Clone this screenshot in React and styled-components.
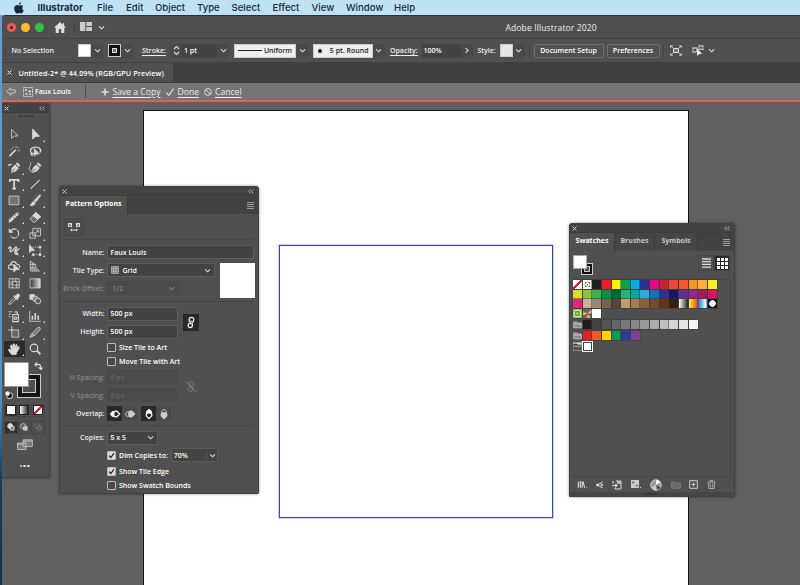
import styled, { createGlobalStyle, css } from "styled-components";

const GlobalStyle = createGlobalStyle`
  * { box-sizing: border-box; }
  body {
    margin: 0;
    overflow: hidden;
    font-family: "Open Sans", "Noto Sans", sans-serif;
  }
  svg { display: block; flex: none; overflow: visible; }
`;

const menuItems = [
  ["File", 29],
  ["Edit", 29],
  ["Object", 42],
  ["Type", 34.5],
  ["Select", 41],
  ["Effect", 39],
  ["View", 34.5],
  ["Window", 48],
  ["Help", 40],
];

const swatchRows = [
  ["none", "reg", "#202020", "#ee1c25", "#fff200", "#00a551", "#00aeef", "#2e3192", "#ec008c", "#c1272d", "#f0453a", "#f15a24", "#f7931e", "#fbb03b", "#fcee21"],
  ["#d9e021", "#8cc63f", "#39b54a", "#009245", "#006837", "#22b573", "#00a99d", "#29abe2", "#1071bc", "#2e3192", "#1b1464", "#662d91", "#93278f", "#a3195b", "#dc145f"],
  ["#ee1e79", "#c7b299", "#998675", "#736357", "#534741", "#c69c6d", "#a67c52", "#8c6239", "#754c24", "#603813", "#36200f", "fade", "sun", "sky", "dot"],
  ["flower", "leaves", "#ffffff"],
];
const grays = ["#1c1c1c", "#444444", "#555555", "#666666", "#777777", "#888888", "#999999", "#acacac", "#c0c0c0", "#d4d4d4", "#e6e6e6", "#f3f3f3"];
const brights = ["#ee1c25", "#f15a24", "#ffd400", "#00a14b", "#21409a", "#7f3f98"];

const patterns = {
  none: "linear-gradient(135deg, #fff 40%, #e01c1c 42% 58%, #fff 60%)",
  reg: "radial-gradient(circle, #444 10%, #fff 14% 32%, #666 36% 44%, transparent 48%), linear-gradient(#fff 44%, transparent 45% 55%, #fff 56%), linear-gradient(90deg, #fff 44%, #444 45% 55%, #fff 56%)",
  fade: "linear-gradient(90deg, #fff, #222)",
  sun: "linear-gradient(90deg, #ffee38, #f7931e 55%, #ed3b24)",
  sky: "linear-gradient(90deg, #1b75bc, #a4d8f4 60%, #fff 80%, #4ca0d8)",
  dot: "radial-gradient(circle, #fff 48%, #111 54%)",
  flower: "radial-gradient(circle, #e9c62a 18%, #57a63a 22% 45%, #e4efc3 48% 60%, #8cc070 64%)",
  leaves: "repeating-conic-gradient(#80604b 0 12%, #d9c5ac 13% 21%, #a98768 22% 28%)",
};

const toolGlyphs = [
  <path d="M4 1.5v10.2l2.8-2.6 4.3-.3z" fill="none" />,
  <path d="M4 1v11.5l3-3.1 4.8-.2z" />,
  <><path d="M1.6 12.5 8.8 5.3" strokeWidth="1.8" /><path d="M9 1v2M12 3l-1.2 1M11 6.3h2M5.5 2.5v1.4M3 5h1.2" /></>,
  <><path d="M6 10C.5 9.5 0 3.5 6 2.6s8.8 3.1 6 5.7M3.5 9.5c-1.7.5-1.5 2.5.8 2" fill="none" strokeWidth="1.5" /><path d="M6 4.2v8l2.3-2.1 3.2-.1z" /></>,
  <><path d="m4 12.8.6-5L8 4.4l3.6 3.3-3 3.6zM9 3.2l1.3-1.3 3.1 3-1 1.2z" /><path d="M0 5c2-1.8 3.5-.3 4-1.5" fill="none" strokeWidth="1.4" /><path d="m4.4 12.2 3.1-3.6" stroke="#505050" /></>,
  <><path d="m4 12.8.6-5L8 4.4l3.6 3.3-3 3.6zM9 3.2l1.3-1.3 3.1 3-1 1.2z" /><path d="M1 1c3 2-1.8 5.5-.6 8.5.8 2 2.2 1 3.6 3.2" fill="none" /><path d="m4.4 12.2 3.1-3.6" stroke="#505050" /></>,
  <path d="M2 4.4V2h9.8v2.4M6.9 2v10M4.8 12h4.2" fill="none" strokeWidth="1.9" />,
  <path d="M2 12 12 2" fill="none" strokeWidth="1.2" />,
  <path d="M1.2 2.3h11v9.7h-11z" fill="#737373" />,
  <><path d="M5.8 7.3 11.8 1c.8-.4 1.5.2 1 1L7.7 9z" /><path d="M1 12.6c2-.4 1.5-3.3 3.7-4 1.6-.3 2.6 1.2 1.8 2.6C5.5 13 3 13.2 1 12.6z" /></>,
  <><path d="m1 12.5 1-3.6 2.4 2.3z" /><path d="m3.5 9.6 8.2-7.2" strokeWidth="3.4" /><path d="m5.3 6.4 2.5 2.5M7.8 4.3l2.4 2.5M10 2.4l2.1 2.1" stroke="#505050" /></>,
  <><path d="m1.2 8.8 6.4-7.1 5.3 4.7-6.5 6.2H4.8z" fill="#696969" /><path d="m4.3 5.3 3.3-3.6 5.3 4.7-3.2 3.1z" /></>,
  <><path d="M3 4.3a5 5 0 1 1-.4 5.5" fill="none" strokeDasharray="7 1" strokeWidth="1.2" /><path d="M1.3 2v4h4z" /></>,
  <><path d="M1 6.6h6v6H1zM4.2 1.5h8.7v8.4H4.2z" fill="none" /><path d="m6.2 8 4.3-4.1M8 3.7h2.8v2.8" fill="none" /></>,
  <><path d="M.5 5.5C2 2 4.5 3.5 3 6S2.5 9.500 5 7.5 8.5 2 9.5 3.5 6.5 8.5 8 9s3-4.5 5-3.5" fill="none" strokeWidth="1.5" /><path d="m7 10.5 3.2-1 1.3 3z" /></>,
  <><path d="M4 3.5h8.5V12H4.7" fill="none" strokeDasharray="1.5 1" /><path d="M.6 1v8.6L3 7.4l3.2-.2zM11.4 2.5h2v2h-2zM11.4 11h2v2h-2zM3.7 11h2v2h-2z" /></>,
  <><path d="M8 10.5C-1.5 11.6-.8 5.5 3 5.2 3.5.8 9 .8 9.3 4.5c4 .4 4.4 3 3.4 4.4M3 5.2c1.8.3 4-.2 5 2" fill="none" strokeWidth="1.2" /><path d="M6.6 5v8.4L9 11l3.8-.3z" /></>,
  <><path d="M1.5 1.4v10.9H12M1.5 1.4 7.5 5.5v3h-6M1.5 5.2h6M4.4 3.5v5" fill="none" /><path d="m8 8 5 4.5H3.5L1.5 9z" fill="#999" stroke="none" /></>,
  <><path d="M1.2 2h11.3v10.2H1.2z" fill="none" /><path d="M1.2 5.2c3 2.5 4.5-2 11.3.8M1.2 9c3.6-3.2 5 2.5 11.3-.5M4.5 2c3 3-2 6 1 10.2M9 2C7 5.6 12 7 9.4 12.2" fill="none" /></>,
  <path d="M1.2 2h11.3v10.2H1.2z" fill="url(#toolfade)" />,
  <><path d="m1 12.8.6-2.4 5.6-5.3L9 6.8l-5.7 5.3z" fill="none" /><path d="m6.4 3.7 1-1 1 .9L10 1.7c2-1.7 4 1 2.4 2.6l-1.8 1.5.9 1-1 .9z" /></>,
  <><path d="M1 1.8h5v5.3H1z" /><circle cx="7" cy="6.5" r="3.1" fill="#888" /><circle cx="10" cy="9" r="3.2" fill="#606060" /></>,
  <><path d="M5.4 5h6.2v8H5.4zM7 2.2h3.4V5" fill="none" strokeWidth="1.2" /><circle cx="8.5" cy="9" r="1.5" fill="none" strokeWidth="1.2" /><path d="M.5 2H5M.5 4.7h3M.7 7.5H3" /></>,
  <><path d="M.8 1v11.7h12.4" fill="none" /><path d="M3.8 11V6.5M7 11V3.3M10.3 11V6.2" strokeWidth="1.8" /></>,
  <><path d="M4.2 4.4h7.8v8H4.2z" fill="#666" /><path d="M4.2 0v6M0 4.4h6" fill="none" /></>,
  <path d="m1 12.8 1.7-3.5L9.8 1.7c1.9-1.2 3.5.8 2.4 2.5l-6 6.3zM2.7 9.3l3.5 1.2" fill="#777" />,
  <path d="M4 13 .8 8.5C0 7.2 1.4 6.5 2.3 7.5l1.3 1.2L3 3.2C2.8 2 4.3 1.8 4.6 3l.9 3.3L5.7 1.7c.1-1.2 1.6-1.2 1.7 0l.2 4.4 1.2-3.8c.4-1.2 1.8-.7 1.5.5l-.8 4.3 1.7-2.5c.8-1 2-.2 1.4.9l-3 5.3L9 13z" />,
  <><circle cx="5.6" cy="5.5" r="4.2" fill="none" strokeWidth="1.3" /><path d="m8.7 8.6 4 4" strokeWidth="2" /></>,
];
const flyoutless = [0, 2, 3, 5, 18, 19, 21, 27];

function Chevron({ size = 7, color = "#e0e0e0", right }) {
  return (
    <svg width={size} height={size} viewBox="0 0 8 8" fill="none" stroke={color} strokeWidth="1.3">
      <path d={right ? "m3 1.3 2.8 2.8L3 6.8" : "m1.3 2.7 2.8 2.8 2.8-2.8"} />
    </svg>
  );
}

function ChainIcon({ off }) {
  return (
    <svg width="12" height="13" viewBox="0 0 12 14" fill="none" stroke={off ? "#858585" : "#eee"} strokeWidth={off ? 0.9 : 1.4}>
      <path d="M4.4 6.4 4 4c0-3.4 5-3.4 5-.2 0 1.4-.8 2.6-2 2.9M7.2 7.4 7.6 10c0 3.2-4.7 3.2-4.7.1 0-1.500.6-2.4 1.8-2.8M6.2 5.1 5.400 9" />
      {off && <path d="m.5 1.5 11 11.5" />}
    </svg>
  );
}

function PanelTop() {
  return (
    <PanelBar>
      <svg width="5" height="5" viewBox="0 0 5 5" stroke="#ddd" strokeWidth=".9"><path d="m.5.5 4 4m0-4-4 4" /></svg>
      <svg width="6" height="5" viewBox="0 0 6 5" fill="none" stroke="#ccc" strokeWidth=".8"><path d="M2.5.5.7 2.4l1.8 1.9M5.3.5 3.5 2.4l1.8 1.9" /></svg>
    </PanelBar>
  );
}

function Hamburger() {
  return <svg width="7" height="7" viewBox="0 0 7 7" stroke="#b5b5b5" strokeWidth=".8"><path d="M0 .5h7M0 2.5h7M0 4.5h7M0 6.5h7" /></svg>;
}

function OverlapIcon({ dim, turn }) {
  return (
    <svg width="10" height="10" viewBox="0 0 10 10" style={{ transform: turn ? "rotate(90deg)" : undefined }}>
      <path d="M.3 5 2.2 2.5h3v5h-3z" fill={dim ? "#505050" : "#fff"} stroke={dim ? "#ccc" : "#fff"} strokeWidth=".8" />
      <path d="M3.8 3.8 5.2 2.2h1.6L9.7 5 6.8 7.8H5.2L3.8 6.2z" fill={dim ? "#ccc" : "#292929"} stroke={dim ? "#ccc" : "#fff"} strokeWidth="1.2" />
    </svg>
  );
}

function FolderIcon({ open }) {
  return (
    <svg width="9" height="9" viewBox="0 0 9 9">
      {open && <path d="M.2.5h8.6v8H.2z" fill="#e2e2e2" />}
      <path d="M.8 2h3l.8 1h3.7v4.8H.8z" fill={open ? "#555" : "#888"} stroke={open ? "#333" : "#ddd"} strokeWidth=".7" />
      <path d="M.8 4.2h7.5" stroke="#eee" strokeWidth=".6" />
    </svg>
  );
}

function Check({ on, children, $h }) {
  return (
    <CheckRow $h={$h}>
      <Box $on={on}>
        {on && <svg width="7" height="7" viewBox="0 0 7 7" fill="none" stroke="#222" strokeWidth="1.2"><path d="m1 3.6 1.8 1.9L6 1.2" /></svg>}
      </Box>
      {children}
    </CheckRow>
  );
}

function ToolsPanel() {
  return (
    <Tools>
      <PanelTop />
      <Grip />
      <ToolGrid>
        {toolGlyphs.map((g, i) => (
          <Tool key={i} $active={i === 26} $flyout={!flyoutless.includes(i)}>
            <svg width="12.5" height="12.5" viewBox="0 0 14 14" fill="#dadada" stroke="#dadada" strokeWidth=".9">{g}</svg>
          </Tool>
        ))}
      </ToolGrid>
      <FillStroke>
        <StrokeSquare><i /></StrokeSquare>
        <FillSquare />
        <SwapIcon width="9" height="9" viewBox="0 0 9 9" fill="none" stroke="#ddd" strokeWidth="1.2">
          <path d="M2 2.4h2.4c2 0 2.4 1 2.4 3.8M3 .4.9 2.4 3 4.4M4.8 5.4l2 2 2-2" />
        </SwapIcon>
        <DefaultIcon width="9" height="9" viewBox="0 0 9 9">
          <circle cx="5.6" cy="5.6" r="3" fill="#151515" stroke="#eee" /><circle cx="3.5" cy="3.5" r="2.7" fill="#fff" stroke="#222" strokeWidth=".8" />
        </DefaultIcon>
      </FillStroke>
      <ModeRow>
        <Mode $active><Chip $bg="#fff" /></Mode>
        <Mode><Chip $bg="linear-gradient(90deg,#fff,#222)" /></Mode>
        <Mode><Chip $bg={patterns.none} /></Mode>
      </ModeRow>
      <ModeRow $low>
        {[1, 0.85, 0.25].map((o, i) => (
          <Mode key={i} $active={i === 0}>
            <svg width="8" height="8" viewBox="0 0 9 9" opacity={o} stroke="#ddd"><circle cx="3.6" cy="3.5" r="2.8" fill={i === 0 ? "#ddd" : "none"} /><path d="M4 4h4v4H4z" fill={i === 1 ? "#ddd" : "#777"} /></svg>
          </Mode>
        ))}
      </ModeRow>
      <ScreenMode>
        <svg width="16" height="12" viewBox="0 0 16 12" fill="#777" stroke="#ccc" strokeWidth=".8"><path d="M.5 4h8.5v6.5H.5zM6.2.8h9.2v6.8H6.2z" /><path d="M6.2 2h9.2M.5 5.2h5" /></svg>
      </ScreenMode>
      <Dots><i /><i /><i /></Dots>
    </Tools>
  );
}

function PatternPanel() {
  return (
    <Pattern>
      <PanelTop />
      <Tabs>
        <Tab $w={68} $active>Pattern Options</Tab>
        <Hamburger />
      </Tabs>
      <TileTool>
        <svg width="14" height="11" viewBox="0 0 14 11" fill="#ddd"><path d="M1 1h4v4H1zM9 1h4v4H9z" /><path d="m2 2 2 2M12 2l-2 2M2 4h1M11 4h1" stroke="#444" strokeWidth=".8" /><path d="m3 8 2-1.6v1.1h4V6.4L11 8 9 9.6V8.5H5v1.1z" /></svg>
      </TileTool>
      <Rule />
      <Field $top={3}><Label>Name:</Label><Input $w={147}>Faux Louis</Input></Field>
      <TileRow>
        <div>
          <Field>
            <Label>Tile Type:</Label>
            <Input $w={108}>
              <svg width="8" height="8" viewBox="0 0 8 8" fill="#777" stroke="#ccc" strokeWidth=".6"><path d="M.5.5h7v7h-7zM.5 2.8h7M.5 5.2h7M2.8.5v7M5.2.5v7" /></svg>
              <span>Grid</span>
              <Chevron />
            </Input>
          </Field>
          <Field $dim><Label>Brick Offset:</Label><Input $w={72} $dim>&nbsp;1/2<Chevron color="#858585" /></Input></Field>
        </div>
        <Preview />
      </TileRow>
      <Rule $top={4} />
      <LinkRow $h={39}>
        <div>
          <Field $top={2.5}><Label>Width:</Label><Input $w={71}>500 px</Input></Field>
          <Field><Label>Height:</Label><Input $w={71}>500 px</Input></Field>
        </div>
        <LinkButton><ChainIcon /></LinkButton>
      </LinkRow>
      <Check $h={13}>Size Tile to Art</Check>
      <Check $h={14}>Move Tile with Art</Check>
      <LinkRow $h={36}>
        <div>
          <Field $dim><Label>H Spacing:</Label><Input $w={71} $dim $faint>0 px</Input></Field>
          <Field $dim><Label>V Spacing:</Label><Input $w={71} $dim $faint>0 px</Input></Field>
        </div>
        <LinkButton $off><ChainIcon off /></LinkButton>
      </LinkRow>
      <Field $top={0.5}>
        <Label>Overlap:</Label>
        <Overlap $active><OverlapIcon /></Overlap>
        <Overlap><OverlapIcon dim /></Overlap>
        <Overlap $active $gap><OverlapIcon turn /></Overlap>
        <Overlap><OverlapIcon dim turn /></Overlap>
      </Field>
      <Rule $top={2} />
      <Field $top={3}><Label>Copies:</Label><Input $w={51}>5 x 5<Chevron /></Input></Field>
      <Check on $h={17}>Dim Copies to: <DimInput><span>70%</span><i><Chevron /></i></DimInput></Check>
      <Check on $h={15}>Show Tile Edge</Check>
      <Check $h={13}>Show Swatch Bounds</Check>
    </Pattern>
  );
}

function SwatchesPanel() {
  return (
    <Swatches>
      <PanelTop />
      <Tabs>
        <Tab $w={45} $active>Swatches</Tab>
        <Tab $w={40}>Brushes</Tab>
        <Tab $w={43}>Symbols</Tab>
        <Hamburger />
      </Tabs>
      <SwatchHead>
        <SwatchPair>
          <i /><b />
        </SwatchPair>
        <ViewButtons>
          <span><svg width="9" height="10" viewBox="0 0 9 10" stroke="#ddd" strokeWidth="1.3"><path d="M0 1h9M0 3.7h9M0 6.4h9M0 9.1h9" /></svg></span>
          <span><svg width="11" height="11" viewBox="0 0 11 11" fill="#fff"><path d="M0 0h3v3H0zM4 0h3v3H4zM8 0h3v3H8zM0 4h3v3H0zM4 4h3v3H4zM8 4h3v3H8zM0 8h3v3H0zM4 8h3v3H4zM8 8h3v3H8z" /></svg></span>
        </ViewButtons>
      </SwatchHead>
      <SwatchList>
        {swatchRows.map((row, r) => (
          <SwatchRow key={r}>{row.map((c, i) => <Swatch key={i} $bg={patterns[c] || c} />)}</SwatchRow>
        ))}
        <SwatchRow $group={10}><FolderIcon />{grays.map((c) => <Swatch key={c} $bg={c} />)}</SwatchRow>
        <SwatchRow $group={11}><FolderIcon />{brights.map((c) => <Swatch key={c} $bg={c} />)}</SwatchRow>
        <SwatchRow $group={11}><FolderIcon open /><Swatch $bg="#fff" $picked /></SwatchRow>
      </SwatchList>
      <SwatchFoot>
        <svg width="10" height="9" viewBox="0 0 10 10" fill="none" stroke="#ddd" strokeWidth="1.2"><path d="M1 2v6.5M3.2 1v7.5M5.2 2v6.5M6 1.5l2 7" /><path d="M9.5 8.6h1" /></svg>
        <svg width="8" height="8" viewBox="0 0 8 8" fill="#ddd" stroke="#ddd"><path d="M6.8.8 1.5 4l5.3 3.1" fill="none" /><circle cx="1.5" cy="4" r="1" /><circle cx="5.8" cy="4" r=".8" /></svg>
        <svg width="10" height="10" viewBox="0 0 10 10" fill="none" stroke="#ddd"><path d="M4 1h5v8H3V7.5" /><path d="M5 1h4v3H5z" fill="#bbb" stroke="none" /><path d="M0 5.5h5M3.3 3.8 5 5.5 3.3 7.2M1 1v2.5" strokeWidth="1.2" /></svg>
        <svg width="10" height="9" viewBox="0 0 10 9" fill="#ccc"><path d="M0 0h8v8H0z" /><path d="M1.2 2.5h2M4.8 5.5h2" stroke="#555" strokeWidth="1.5" /><path d="M9 7h1v1H9z" /></svg>
        <svg width="12" height="12" viewBox="0 0 12 12"><circle cx="6" cy="6" r="5.3" fill="#999" stroke="#ddd" strokeWidth=".8" /><path d="M6 6V.8A5.2 5.2 0 0 1 10.5 3.4z" fill="#eee" /><path d="M6 6 1.5 8.5A5.2 5.2 0 0 0 6 11.2z" fill="#ccc" /><path d="m6 6 4.5 2.5a5 5 0 0 1-2.6 2.2z" fill="#444" /></svg>
        <svg width="10" height="8" viewBox="0 0 10 8"><path d="M.5 1h3l.8 1h5v5.3H.5z" fill="#6b6b6b" stroke="#777" /></svg>
        <svg width="9" height="9" viewBox="0 0 9 9" fill="none" stroke="#ccc"><path d="M.7.7h7.6v7.6H.7zM4.5 2.6v3.8M2.6 4.5h3.8" /></svg>
        <svg width="9" height="9" viewBox="0 0 9 9" fill="none" stroke="#aaa"><path d="M.5 2h8M3 1.8V.6h3v1.2M1.4 2.5l.4 6h5.4l.4-6M3.3 3.5v4M5.7 3.5v4" /></svg>
      </SwatchFoot>
      <Grabber />
    </Swatches>
  );
}

export default function App() {
  return (
    <Desktop>
      <GlobalStyle />
      <MenuBar>
        <svg width="10" height="12" viewBox="0 0 10 12" fill="#142a3c"><path d="M7 .2C5.7.3 4.7 1.6 4.9 2.8 6.2 2.8 7.1 1.5 7 .2zM9.3 4C8 3 6.7 3 5.6 3.5 4.9 3.8 4.5 3.5 3.7 3.2 1.7 2.7.2 4.2.2 6.4c0 2.3 1.5 5 3 5 .8 0 1.1-.5 2.1-.5s1.2.5 2 .5c1.1 0 2-1.6 2.5-2.8C7.9 7.7 7.8 5 9.3 4z" /></svg>
        <AppName>Illustrator</AppName>
        {menuItems.map(([name, w]) => <MenuItem key={name} $w={w}>{name}</MenuItem>)}
      </MenuBar>
      <Window>
        <TitleBar>
          <Light $c="#ee5b50"><i /></Light>
          <Light $c="#f6bb30" />
          <Light $c="#2ec53f" />
          <HomeIcon width="12" height="11" viewBox="0 0 12 11" fill="#ddd"><path d="M6 0 0 5.7h1.7V11h3.1V7h2.4v4h3.1V5.7H12L10.2 4V1H8.8v1.7z" /></HomeIcon>
          <Divider $h={13} />
          <LayoutIcon width="12" height="9" viewBox="0 0 12 9" fill="#ccc"><path d="M0 0h5.3v9H0zM6.3 0H12v4H6.3zM6.3 5H12v4H6.3z" /></LayoutIcon>
          <Chevron />
          <Title>Adobe Illustrator 2020</Title>
        </TitleBar>
        <ControlBar>
          <Divider $h={13} />
          <Text $w={66.5} $ml={5.5}>No Selection</Text>
          <ColorChip $bg="#fff" /><Arrow><Chevron /></Arrow>
          <ColorChip $ml={5} $bg="#111"><i /></ColorChip><Arrow><Chevron /></Arrow>
          <Text $ml={9} $w={28} $under><u>Stroke:</u></Text>
          <Stepper><svg width="7" height="11" viewBox="0 0 7 11" fill="none" stroke="#ddd" strokeWidth="1.1"><path d="m1 4 2.5-2.5L6 4M1 7l2.5 2.5L6 7" /></svg></Stepper>
          <NumberField $w={35}>1 pt</NumberField><Arrow><Chevron /></Arrow>
          <WhiteBox $w={62} $ml={5}><Line /><span>Uniform</span></WhiteBox><Arrow><Chevron /></Arrow>
          <WhiteBox $w={60} $ml={4.5}><Dot /><span>5 pt. Round</span></WhiteBox><Arrow><Chevron /></Arrow>
          <Text $ml={5.5} $w={31.5} $under><u>Opacity:</u></Text>
          <NumberField $w={39}>100%</NumberField><Arrow><Chevron right /></Arrow>
          <Text $ml={5} $w={22}>Style:</Text>
          <ColorChip $bg="#e6e6e6" /><Arrow><Chevron /></Arrow>
          <Divider $h={13} $ml={4.5} />
          <Button $w={70} $ml={3.5}>Document Setup</Button>
          <Button $w={53} $ml={3}>Preferences</Button>
          <Divider $h={13} $ml={3} />
          <ControlIcon $ml={6.5} width="12" height="11" viewBox="0 0 12 11" fill="none" stroke="#ddd"><path d="M3.5 3.5h5v4h-5z" fill="#777" /><path d="M.5 3V.7h2.3M9 .7h2.4V3M.5 8v2.3h2.3M9 10.3h2.4V8M1 1l2 2M11 1 9 3M1 10l2-2M11 10 9 8" strokeWidth=".8" /></ControlIcon>
          <ControlIcon $ml={10} width="12" height="11" viewBox="0 0 12 11" fill="none" stroke="#ccc" strokeWidth=".8"><path d="M1 3h3.7v4H1zM7 1h3.8v3.3H7zM0 3h6M0 7h4M6 .9h6M6 4.3h6" /><path d="M5 3.5V11l2.2-2h2.9z" fill="#eee" stroke="none" /></ControlIcon>
          <ControlIcon $ml={4} width="7" height="7" viewBox="0 0 8 8" fill="none" stroke="#e0e0e0" strokeWidth="1.3"><path d="m1.3 2.7 2.8 2.8 2.8-2.8" /></ControlIcon>
        </ControlBar>
        <DocTabs>
          <DocTab>
            <svg width="5" height="5" viewBox="0 0 5 5" stroke="#eee"><path d="m.5.5 4 4m0-4-4 4" /></svg>
            <span>Untitled-2* @ 44.09% (RGB/GPU Preview)</span>
          </DocTab>
        </DocTabs>
        <IsolationBar>
          <svg width="10" height="9" viewBox="0 0 10 9" fill="none" stroke="#ccc" strokeWidth=".9"><path d="M.7 4.5 4.7.8v2.1h4.4v3.2H4.7v2.1z" /></svg>
          <PatternGlyph width="10" height="10" viewBox="0 0 10 10" stroke="#ddd" fill="#ddd"><path d="M.5.5h9v9h-9z" fill="none" strokeDasharray="4.5 .5" strokeWidth=".7" /><path d="M2.5 2.5h1v1h-1zM6 4h1.5v1H6zM3 6.5h1v1H3zM6.5 7h1v.5h-1z" /></PatternGlyph>
          <Crumb>Faux Louis</Crumb>
          <CrumbRule />
          <Action $w={65}><svg width="8" height="8" viewBox="0 0 8 8" stroke="#ddd" strokeWidth="1.6"><path d="M4 .5v7M.5 4h7" /></svg><u>Save a Copy</u></Action>
          <Action $w={37.5}><svg width="8" height="8" viewBox="0 0 8 8" fill="none" stroke="#ddd" strokeWidth="1.2"><path d="m.5 4.6 2.3 2.7L7.6.6" /></svg><u>Done</u></Action>
          <Action $w={40}><svg width="8" height="8" viewBox="0 0 8 8" fill="none" stroke="#ddd"><circle cx="4" cy="4" r="3.4" /><path d="m1.6 1.6 4.8 4.8" /></svg><u>Cancel</u></Action>
        </IsolationBar>
        <Canvas>
          <Artboard><Tile /></Artboard>
          <ToolsPanel />
          <PatternPanel />
          <SwatchesPanel />
        </Canvas>
      </Window>
      <svg width="0" height="0">
        <defs><linearGradient id="toolfade"><stop stopColor="#333" /><stop offset="1" stopColor="#ddd" /></linearGradient></defs>
      </svg>
    </Desktop>
  );
}

const Desktop = styled.div`
  width: 800px;
  height: 585px;
  display: flex;
  flex-direction: column;
  overflow: hidden;
  background: linear-gradient(#659fce, #4e92c7 400px, #123b5d 480px, #0c3352);
`;
const MenuBar = styled.div`
  flex: none;
  height: 15px;
  padding-left: 14px;
  display: flex;
  align-items: center;
  background: #bee1f5;
  color: #142a3c;
  font: 500 9.6px/14px Inter, sans-serif;
`;
const AppName = styled.b`
  width: 59.5px;
  margin-left: 13.5px;
  font-weight: 700;
`;
const MenuItem = styled.span`
  width: ${(p) => p.$w}px;
`;
const Window = styled.div`
  flex: 1;
  margin-left: 2px;
  display: flex;
  flex-direction: column;
  border-top: 1px solid #2a3337;
  border-radius: 4px 0 0 0;
  background: #505050;
  color: #ececec;
  font-size: 7px;
  font-weight: 600;
`;
const TitleBar = styled.div`
  height: 23px;
  flex: none;
  padding: 1px 0 0 5px;
  display: flex;
  align-items: center;
  border-bottom: 1px solid #444;
`;
const Light = styled.span`
  width: 9px;
  height: 9px;
  margin-right: 4.8px;
  display: grid;
  place-items: center;
  border-radius: 50%;
  background: ${(p) => p.$c};
  i {
    width: 3px;
    height: 3px;
    border-radius: 50%;
    background: #501009;
  }
`;
const HomeIcon = styled.svg`
  margin: 0 8px 0 6px;
`;
const LayoutIcon = styled.svg`
  margin: -2px 6px 0 5px;
`;
const Divider = styled.span`
  width: 1px;
  height: ${(p) => p.$h}px;
  flex: none;
  margin-left: ${(p) => p.$ml || 0}px;
  background: #434343;
`;
const Title = styled.span`
  margin-left: 400px;
  font: 500 8.6px/12px "Open Sans", sans-serif;
  letter-spacing: 0.1px;
`;
const ControlBar = styled.div`
  height: 24px;
  flex: none;
  padding-left: 3px;
  display: flex;
  align-items: center;
  border-bottom: 1px solid #414141;
`;
const Text = styled.span`
  flex: none;
  width: ${(p) => p.$w}px;
  margin-left: ${(p) => p.$ml}px;
  white-space: nowrap;
  ${(p) => p.$under && css`
    u { text-underline-offset: 1.5px; text-decoration-thickness: 0.7px; }
  `}
`;
const ColorChip = styled.span`
  flex: none;
  width: 13px;
  height: 13px;
  margin-left: ${(p) => p.$ml || 0}px;
  display: grid;
  place-items: center;
  border: 1px solid #ccc;
  background: ${(p) => p.$bg};
  i {
    width: 5px;
    height: 5px;
    border: 1px solid #ddd;
    background: #777;
  }
`;
const Arrow = styled.span`
  flex: none;
  width: 12px;
  height: 14px;
  display: grid;
  place-items: center;
  border: 1px solid #474747;
  background: #4a4a4a;
`;
const Stepper = styled(Arrow)`
  width: 12px;
`;
const NumberField = styled.span`
  flex: none;
  width: ${(p) => p.$w}px;
  height: 14px;
  padding-left: 2px;
  background: #424242;
  color: #fff;
  line-height: 14px;
`;
const WhiteBox = styled.span`
  flex: none;
  width: ${(p) => p.$w}px;
  height: 14px;
  margin-left: ${(p) => p.$ml}px;
  padding: 0 3px;
  display: flex;
  align-items: center;
  justify-content: space-between;
  border: 1px solid #ccc;
  background: #efefef;
  color: #222;
`;
const Line = styled.i`
  width: 24px;
  height: 1px;
  background: #222;
`;
const Dot = styled.i`
  width: 4px;
  height: 4px;
  margin-left: 1px;
  border-radius: 50%;
  background: #111;
`;
const Button = styled.span`
  flex: none;
  width: ${(p) => p.$w}px;
  height: 14px;
  margin-left: ${(p) => p.$ml}px;
  border: 1px solid #707070;
  border-radius: 2px;
  text-align: center;
  line-height: 12px;
  color: #fff;
`;
const ControlIcon = styled.svg`
  margin-left: ${(p) => p.$ml}px;
`;
const DocTabs = styled.div`
  height: 20px;
  flex: none;
  background: #404040;
  border-bottom: 1px solid #393939;
`;
const DocTab = styled.div`
  width: 171px;
  height: 19px;
  padding-left: 5px;
  display: flex;
  align-items: center;
  gap: 6.5px;
  background: #505050;
  color: #fff;
  font-size: 7.2px;
  letter-spacing: 0.1px;
  white-space: nowrap;
`;
const IsolationBar = styled.div`
  height: 19px;
  flex: none;
  padding: 0 0 0 4px;
  display: flex;
  align-items: center;
  background: #747474;
  border-bottom: 2px solid #dd625d;
`;
const PatternGlyph = styled.svg`
  margin-left: 7px;
`;
const Crumb = styled.span`
  margin-left: 2px;
  width: 51px;
  color: #fff;
`;
const CrumbRule = styled.span`
  width: 1px;
  height: 13px;
  margin: 0 15px 0 -1px;
  background: #484848;
`;
const Action = styled.span`
  width: ${(p) => p.$w}px;
  display: flex;
  align-items: center;
  gap: 3.5px;
  white-space: nowrap;
  font-size: 8.6px;
  font-weight: 500;
  line-height: 12px;
  u { text-underline-offset: 1.5px; text-decoration-thickness: 1px; }
`;
const Canvas = styled.div`
  flex: 1;
  position: relative;
  overflow: hidden;
  background: #606060;
`;
const Artboard = styled.div`
  position: absolute;
  left: 141px;
  top: 8px;
  width: 546px;
  height: 490px;
  border: 1px solid #111;
  background: #fff;
`;
const Tile = styled.div`
  position: absolute;
  left: 135px;
  top: 134px;
  width: 274px;
  height: 273px;
  border: 1px solid #3540e0;
  box-shadow: 0 0 0 1px rgba(70, 80, 235, 0.25);
`;
const Panel = styled.div`
  position: absolute;
  border: 1px solid #424242;
  border-radius: 3px 3px 1px 1px;
  background: #505050;
  box-shadow: 0 0 3px rgba(0, 0, 0, 0.45);
`;
const Tools = styled(Panel)`
  left: 0;
  top: 1px;
  width: 48px;
  height: 375px;
  border-left: 0;
  border-radius: 0 3px 1px 0;
`;
const Pattern = styled(Panel)`
  left: 57px;
  top: 84px;
  width: 200px;
  height: 308px;
`;
const Swatches = styled(Panel)`
  left: 567px;
  top: 121px;
  width: 166px;
  height: 274px;
`;
const PanelBar = styled.div`
  height: 9px;
  padding: 0 4px 0 2px;
  display: flex;
  align-items: center;
  justify-content: space-between;
  background: #434343;
  border-bottom: 1px solid #3d3d3d;
`;
const Grip = styled.div`
  width: 14px;
  height: 2px;
  margin: 2px auto 9px;
  border-top: 1px dotted #333;
  border-bottom: 1px dotted #333;
`;
const ToolGrid = styled.div`
  padding-left: 2px;
  display: grid;
  grid-template-columns: 21px 21px;
  grid-auto-rows: 16.54px;
`;
const Tool = styled.span`
  position: relative;
  display: grid;
  place-items: center;
  ${(p) => p.$active && css`background: #2c2c2c;`}
  ${(p) => p.$flyout && css`
    &::after {
      content: "";
      position: absolute;
      right: 1px;
      bottom: 1px;
      border: 1px solid #ddd;
      border-top-color: transparent;
      border-left-color: transparent;
    }
  `}
`;
const FillStroke = styled.div`
  position: relative;
  height: 46px;
`;
const FillSquare = styled.i`
  position: absolute;
  left: 2px;
  top: 5px;
  width: 25px;
  height: 25px;
  border: 1px solid #999;
  background: #fff;
`;
const StrokeSquare = styled.span`
  position: absolute;
  left: 15px;
  top: 17px;
  width: 24px;
  height: 24px;
  padding: 4px;
  border: 1px solid #ccc;
  background: #151515;
  i {
    display: block;
    width: 100%;
    height: 100%;
    border: 1px solid #ccc;
    background: #505050;
  }
`;
const SwapIcon = styled.svg`
  position: absolute;
  left: 32px;
  top: 5px;
`;
const DefaultIcon = styled.svg`
  position: absolute;
  left: 2px;
  top: 33px;
`;
const ModeRow = styled.div`
  margin: ${(p) => (p.$low ? 4 : 0.5)}px 0 0 2px;
  display: flex;
`;
const Mode = styled.span`
  width: 13.5px;
  height: 13px;
  display: grid;
  place-items: center;
  border: 1px solid #464646;
  background: ${(p) => (p.$active ? "#333" : "#505050")};
`;
const Chip = styled.i`
  width: 10px;
  height: 10px;
  border: 1px solid #222;
  background: ${(p) => p.$bg};
`;
const ScreenMode = styled.div`
  margin: 5px 0 0 14.5px;
`;
const Dots = styled.div`
  margin: 14px 0 0 17.5px;
  display: flex;
  gap: 1.5px;
  i {
    width: 2.4px;
    height: 2.4px;
    border-radius: 50%;
    background: #ddd;
  }
`;
const Tabs = styled.div`
  height: 18px;
  display: flex;
  align-items: center;
  background: #424242;
  > svg {
    margin: 1px 4px 0 auto;
  }
`;
const Tab = styled.span`
  width: ${(p) => p.$w}px;
  height: 100%;
  border-right: 1px solid #3b3b3b;
  background: ${(p) => (p.$active ? "#505050" : "#464646")};
  color: ${(p) => (p.$active ? "#fff" : "#c8c8c8")};
  font-weight: 700;
  line-height: 16px;
  text-align: center;
  white-space: nowrap;
`;
const TileTool = styled.div`
  width: 20px;
  height: 18px;
  margin: 4px 0 3px 4px;
  display: grid;
  place-items: center;
  border: 1px solid #474747;
  background: #4c4c4c;
`;
const Rule = styled.div`
  height: 1px;
  margin: ${(p) => p.$top || 0}px 4px 0;
  background: #464646;
`;
const Field = styled.div`
  height: 18px;
  margin-top: ${(p) => p.$top || 0}px;
  display: flex;
  align-items: center;
  color: ${(p) => (p.$dim ? "#858585" : "#ececec")};
`;
const Label = styled.span`
  width: 44.5px;
  margin-right: 2.5px;
  display: flex;
  justify-content: flex-end;
  white-space: nowrap;
`;
const Input = styled.span`
  flex: none;
  width: ${(p) => p.$w}px;
  height: 14px;
  padding: 0 3px 0 2.5px;
  display: flex;
  align-items: center;
  gap: 4px;
  border: 1px solid ${(p) => (p.$dim ? "#4b4b4b" : "#5d5d5d")};
  background: ${(p) => (p.$dim ? "#4b4b4b" : "#434343")};
  color: ${(p) => (p.$faint ? "#646464" : p.$dim ? "#858585" : "#fff")};
  > svg:last-child {
    margin-left: auto;
  }
`;
const TileRow = styled.div`
  display: flex;
  height: 36px;
`;
const Preview = styled.div`
  width: 35px;
  height: 35px;
  margin: 2px 0 0 4.5px;
  background: #fff;
`;
const LinkRow = styled.div`
  height: ${(p) => p.$h}px;
  display: flex;
  align-items: center;
`;
const LinkButton = styled.span`
  width: 16px;
  height: 17px;
  margin: ${(p) => (p.$off ? 0 : 1)}px 0 0 5px;
  display: grid;
  place-items: center;
  background: ${(p) => (p.$off ? "none" : "#292929")};
`;
const CheckRow = styled.div`
  height: ${(p) => p.$h}px;
  padding-left: 47px;
  display: flex;
  align-items: center;
  gap: 3px;
  color: #fff;
  white-space: nowrap;
`;
const Box = styled.span`
  width: 9px;
  height: 9px;
  border: 1px solid #bbb;
  border-radius: 1px;
  background: ${(p) => (p.$on ? "#ddd" : "#4a4a4a")};
`;
const DimInput = styled.span`
  width: 47px;
  height: 14px;
  display: flex;
  align-items: center;
  border: 1px solid #5b5b5b;
  background: #434343;
  span { width: 34px; padding-left: 2px; }
  i { padding-left: 2px; border-left: 1px solid #5b5b5b; }
`;
const Overlap = styled.span`
  width: 15px;
  height: 15px;
  margin-left: ${(p) => (p.$gap ? 4 : 0)}px;
  display: grid;
  place-items: center;
  background: ${(p) => (p.$active ? "#292929" : "#4a4a4a")};
`;
const SwatchHead = styled.div`
  height: 28px;
  padding: 4px 4px 0 3px;
  display: flex;
  justify-content: space-between;
`;
const SwatchPair = styled.span`
  position: relative;
  width: 21px;
  height: 21px;
  b, i { position: absolute; }
  b {
    left: 0;
    top: 0;
    width: 14px;
    height: 14px;
    border: 1px solid #aaa;
    background: #fff;
  }
  i {
    left: 8px;
    top: 8px;
    width: 12px;
    height: 12px;
    border: 1px solid #ccc;
    box-shadow: inset 0 0 0 2px #111, inset 0 0 0 3px #ccc;
  }
`;
const ViewButtons = styled.span`
  display: flex;
  span {
    width: 16px;
    height: 16px;
    display: grid;
    place-items: center;
    border: 1px solid #454545;
  }
  span:last-child { background: #292929; }
`;
const SwatchList = styled.div`
  height: 198px;
  margin: 0 3px;
  border: 1px solid #484848;
  border-left: 0;
`;
const SwatchRow = styled.div`
  height: ${(p) => p.$group || 9.65}px;
  display: flex;
  align-items: ${(p) => (p.$group ? "flex-end" : "flex-start")};
  gap: 0.65px;
`;
const Swatch = styled.i`
  flex: none;
  width: 9px;
  height: 9px;
  background: ${(p) => p.$bg};
  box-shadow: 0 0 0 0.5px #383838;
  ${(p) => p.$picked && css`border: 1px solid #444; outline: 1px solid #fff;`}
`;
const SwatchFoot = styled.div`
  height: 15px;
  padding: 0 18px 0 7px;
  display: flex;
  align-items: center;
  justify-content: space-between;
`;
const Grabber = styled.div`
  height: 4px;
  background: linear-gradient(#393939, #393939) center / 14px 2px no-repeat #464646;
`;
